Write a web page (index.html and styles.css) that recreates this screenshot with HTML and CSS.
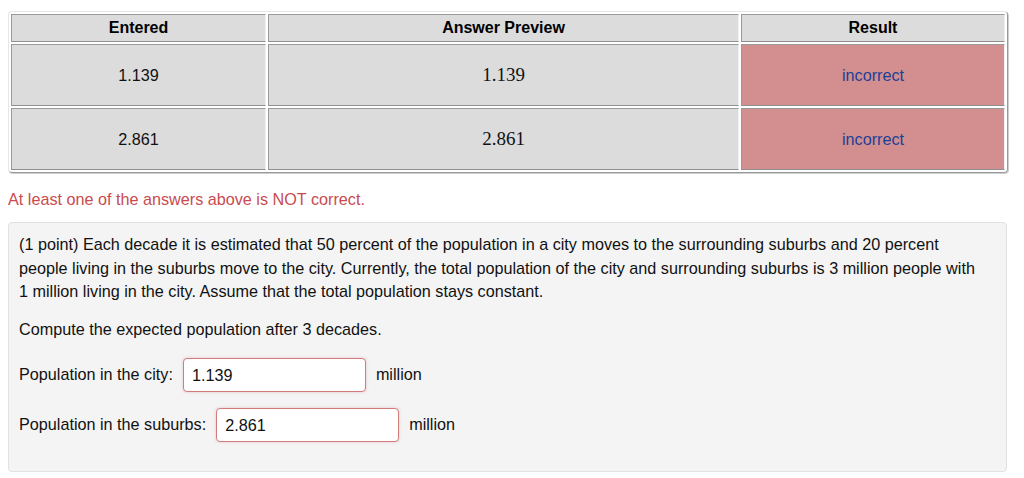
FILE: index.html
```html
<!DOCTYPE html>
<html>
<head>
<meta charset="utf-8">
<link rel="stylesheet" href="styles.css">
</head>
<body>
<table class="results">
  <colgroup><col class="c1"><col class="c2"><col class="c3"></colgroup>
  <thead>
    <tr><th>Entered</th><th>Answer Preview</th><th>Result</th></tr>
  </thead>
  <tbody>
    <tr><td>1.139</td><td class="preview">1.139</td><td class="bad">incorrect</td></tr>
    <tr><td>2.861</td><td class="preview">2.861</td><td class="bad">incorrect</td></tr>
  </tbody>
</table>
<div class="message">At least one of the answers above is NOT correct.</div>
<div class="problem">
  <p class="statement">(1 point) Each decade it is estimated that 50 percent of the population in a city moves to the surrounding suburbs and 20 percent people living in the suburbs move to the city. Currently, the total population of the city and surrounding suburbs is 3 million people with 1 million living in the city. Assume that the total population stays constant.</p>
  <p class="task">Compute the expected population after 3 decades.</p>
  <div class="field"><span>Population in the city:</span><span class="input">1.139</span><span>million</span></div>
  <div class="field"><span>Population in the suburbs:</span><span class="input">2.861</span><span>million</span></div>
</div>
</body>
</html>
```
FILE: styles.css
```css
body {
  margin: 0;
  padding: 11px 8px 0;
  font-family: "Liberation Sans", Arial, sans-serif;
  color: #111;
  background: #fff;
}
.results {
  width: 998px;
  table-layout: fixed;
  border-collapse: separate;
  border-spacing: 2px;
  border: 1px solid;
  border-color: #e6e6e6 #999 #999 #e6e6e6;
  border-radius: 4px;
  box-shadow: 1px 1px 0 #cfcfcf;
}
.c1 { width: 255px; }
.c2 { width: 471px; }
.c3 { width: 264px; }
.results th, .results td {
  background: #dcdcdc;
  border: 1px solid;
  border-color: #9a9a9a #f0f0f0 #8f8f8f #9a9a9a;
  text-align: center;
  padding: 0;
}
.results th {
  height: 26px;
  font-size: 16px;
  font-weight: bold;
  color: #000;
}
.results td {
  height: 59px;
  font-size: 16.2px;
  color: #111;
}
.results td.preview {
  font-family: "Liberation Serif", "Times New Roman", serif;
  font-size: 19px;
  padding-bottom: 1px;
}
.results td.bad {
  background: #d38f8f;
  color: #1b3f97;
}
.message {
  margin-top: 17px;
  font-size: 16.2px;
  color: #c84c4f;
  line-height: 18px;
}
.problem {
  margin-top: 14px;
  width: 960px;
  background: #f4f4f4;
  border: 1px solid #e1e1e1;
  border-radius: 4px;
  padding: 10px 27px 29px 10px;
  font-size: 16.2px;
  line-height: 23.5px;
  color: #111;
}
.problem p {
  margin: 0 0 14px;
}
.problem .task {
  margin-bottom: 17px;
}
.field {
  display: flex;
  align-items: center;
  height: 34px;
  margin-bottom: 16px;
}
.field:last-child { margin-bottom: 0; }
.input {
  width: 173px;
  height: 32px;
  box-sizing: content-box;
  padding: 0 0 0 8px;
  margin: 0 10px 0 10px;
  border: 1px solid #d27c7c;
  border-radius: 4px;
  background: #fff;
  box-shadow: 0 0 3px rgba(210, 100, 100, 0.35);
  line-height: 32px;
  font-size: 16.2px;
}
```
